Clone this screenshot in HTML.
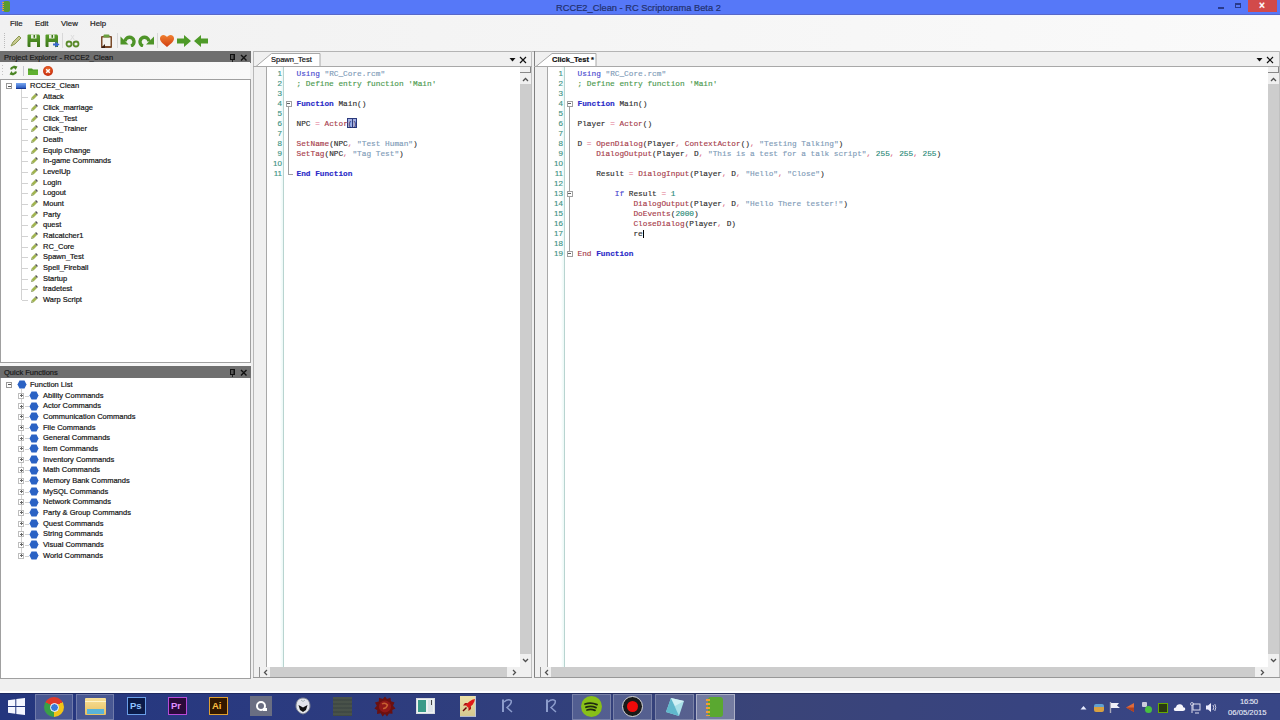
<!DOCTYPE html><html><head><meta charset="utf-8"><style>
*{margin:0;padding:0;box-sizing:border-box}
html,body{width:1280px;height:720px;overflow:hidden;background:#f0f0f0;font-family:"Liberation Sans",sans-serif;position:relative}
.abs{position:absolute}
.t{position:absolute;white-space:pre;font-family:"Liberation Sans",sans-serif;font-size:7.5px;line-height:10px;color:#141414;-webkit-text-stroke:0.2px currentColor}
.m{position:absolute;white-space:pre;font-family:"Liberation Mono",monospace;font-size:7.78px;line-height:10px;color:#333;-webkit-text-stroke:0.15px currentColor}
.hdr{position:absolute;background:#6f6f6f}
.kw{color:#4a4ad0}
.kb{color:#2a2ac8;font-weight:bold}
.st{color:#7f9cb8}
.cm{color:#4c9a50}
.fn{color:#a8404c}
.op{color:#e0708a}
.nu{color:#2a8a78}
.id{color:#303030}
.ln{position:absolute;white-space:pre;font-family:"Liberation Sans",sans-serif;font-size:8px;line-height:10px;color:#3e9484;text-align:right;-webkit-text-stroke:0.15px currentColor}
</style></head><body>
<div class="abs" style="left:0;top:0;width:1280px;height:14px;background:#5678f8"></div>
<div class="abs" style="left:0;top:14px;width:1280px;height:1px;background:#5868c8"></div>
<div class="abs" style="left:0;top:15px;width:1280px;height:1px;background:#f4f8ff"></div>
<div class="t" style="left:556px;top:2.4px;font-size:9.3px;line-height:12px;color:#22306e">RCCE2_Clean - RC Scriptorama Beta 2</div>
<div class="abs" style="left:3px;top:1px;width:7px;height:11px;background:#5a9a30;border-radius:2px"></div>
<div class="abs" style="left:2px;top:2px;width:2px;height:9px;background:repeating-linear-gradient(#e0a040 0 1px,transparent 1px 2px)"></div>
<div class="abs" style="left:1218px;top:7px;width:6px;height:1.5px;background:#2a3a8a"></div>
<div class="abs" style="left:1235px;top:3px;width:6px;height:5px;border:1.5px solid #2a3a8a;border-top-width:2px"></div>
<div class="abs" style="left:1248px;top:0;width:29px;height:12px;background:#d24a4a"></div>
<div class="t" style="left:1259px;top:0px;font-size:10px;line-height:12px;color:#fff;font-weight:bold">×</div>
<div class="abs" style="left:0;top:16px;width:1280px;height:35px;background:linear-gradient(90deg,#f1f1f1,#f5f5f5 45%,#fafafa)"></div>
<div class="t" style="left:10px;top:18.7px;font-size:7.8px;line-height:10px;color:#222">File</div>
<div class="t" style="left:35px;top:18.7px;font-size:7.8px;line-height:10px;color:#222">Edit</div>
<div class="t" style="left:61px;top:18.7px;font-size:7.8px;line-height:10px;color:#222">View</div>
<div class="t" style="left:90px;top:18.7px;font-size:7.8px;line-height:10px;color:#222">Help</div>
<div class="abs" style="left:4px;top:33px;width:1px;height:15px;background:repeating-linear-gradient(#bbb 0 1px,transparent 1px 2px)"></div>
<svg class="abs" style="left:9px;top:34px" width="14" height="14"><path d="M2 12 L4 8 L10 2 L12 4 L6 10 Z" fill="#c8c890" stroke="#8a9a50" stroke-width="1"/></svg>
<svg class="abs" style="left:27px;top:34px" width="15" height="14"><defs><linearGradient id="fg27" x1="0" y1="0" x2="0" y2="1"><stop offset="0" stop-color="#5a9e2a"/><stop offset="1" stop-color="#3a7418"/></linearGradient></defs><path d="M1.5 0.5 H12 L13 1.5 V13 H1.5 Q0.5 13 0.5 12 V1.5 Q0.5 0.5 1.5 0.5Z" fill="url(#fg27)"/><rect x="4" y="0.5" width="5.5" height="4" fill="#e8eee0"/><rect x="6.5" y="1" width="1.5" height="2.8" fill="#3a7418"/><rect x="3.5" y="8" width="6.5" height="5" fill="#f0f2ec"/></svg>
<svg class="abs" style="left:45px;top:34px" width="15" height="14"><defs><linearGradient id="fg45" x1="0" y1="0" x2="0" y2="1"><stop offset="0" stop-color="#5a9e2a"/><stop offset="1" stop-color="#3a7418"/></linearGradient></defs><path d="M1.5 0.5 H12 L13 1.5 V13 H1.5 Q0.5 13 0.5 12 V1.5 Q0.5 0.5 1.5 0.5Z" fill="url(#fg45)"/><rect x="4" y="0.5" width="5.5" height="4" fill="#e8eee0"/><rect x="6.5" y="1" width="1.5" height="2.8" fill="#3a7418"/><rect x="3.5" y="8" width="6.5" height="5" fill="#f0f2ec"/><path d="M8 9.5 H10.5 V7.5 L14.5 10.5 L10.5 13.5 V11.5 H8Z" fill="#3a68d0"/></svg>
<div class="abs" style="left:62px;top:33px;width:1px;height:15px;background:#d8d8d8"></div>
<svg class="abs" style="left:65px;top:34px" width="15" height="14"><circle cx="4" cy="10" r="2.5" fill="none" stroke="#5a8a2a" stroke-width="1.8"/><circle cx="11" cy="10" r="2.5" fill="none" stroke="#5a8a2a" stroke-width="1.8"/><path d="M5 7 L9 1 M10 7 L6 1" stroke="#ddd" stroke-width="1"/></svg>
<svg class="abs" style="left:100px;top:34px" width="14" height="14"><rect x="1" y="2" width="11" height="12" rx="1" fill="#7a4a2a"/><rect x="2.5" y="3.5" width="8" height="8.5" fill="#f4f4ee"/><path d="M1 14 L5 10 V14Z" fill="#3a2010"/><rect x="3.5" y="0.5" width="6" height="3" rx="1" fill="#6aa040"/></svg>
<div class="abs" style="left:117px;top:33px;width:1px;height:15px;background:#d8d8d8"></div>
<svg class="abs" style="left:120px;top:35px" width="17" height="12"><path d="M5 6.5 A4.5 4.5 0 1 1 11 11" stroke="#4e9428" stroke-width="3.4" fill="none"/><path d="M0.5 1.5 V9.5 H8.5Z" fill="#4e9428"/></svg>
<svg class="abs" style="left:138px;top:35px" width="17" height="12"><path d="M11 6.5 A4.5 4.5 0 1 0 5 11" stroke="#4e9428" stroke-width="3.4" fill="none"/><path d="M16 1.5 V9.5 H8Z" fill="#4e9428"/></svg>
<div class="abs" style="left:157px;top:33px;width:1px;height:15px;background:#d8d8d8"></div>
<svg class="abs" style="left:159px;top:34px" width="16" height="14"><path d="M8 13 C3 9 1 7 1 4.5 C1 2.5 2.5 1 4.5 1 C6 1 7.2 2 8 3 C8.8 2 10 1 11.5 1 C13.5 1 15 2.5 15 4.5 C15 7 13 9 8 13Z" fill="url(#hg)"/><defs><linearGradient id="hg" x1="0" y1="0" x2="0" y2="1"><stop offset="0" stop-color="#f08030"/><stop offset="1" stop-color="#d03c10"/></linearGradient></defs></svg>
<svg class="abs" style="left:176px;top:35px" width="16" height="12"><path d="M1 3.5 H8 V0 L15 6 L8 12 V8.5 H1Z" fill="#4e9a28"/></svg>
<svg class="abs" style="left:193px;top:35px" width="16" height="12"><path d="M15 3.5 H8 V0 L1 6 L8 12 V8.5 H15Z" fill="#4e9a28"/></svg>
<div class="hdr" style="left:0;top:50.8px;width:250.5px;height:11.8px"></div>
<div class="t" style="left:4px;top:52.5px;color:#1a1a1a">Project Explorer - RCCE2_Clean</div>
<svg class="abs" style="left:229px;top:53px" width="8" height="9"><rect x="1.5" y="1.5" width="4" height="5" fill="#555" stroke="#111" stroke-width="1"/><rect x="4.5" y="1" width="1.5" height="6" fill="#111"/><path d="M3.5 7 V9.5" stroke="#222" stroke-width="1"/></svg>
<svg class="abs" style="left:240px;top:54px" width="8" height="8"><path d="M1 1 L6.5 6.5 M6.5 1 L1 6.5" stroke="#111" stroke-width="1.4"/></svg>
<div class="abs" style="left:0;top:62px;width:250px;height:17px;background:linear-gradient(90deg,#f5f5f5,#f9f9f9)"></div>
<div class="abs" style="left:2px;top:65px;width:1px;height:10px;background:repeating-linear-gradient(#c4c4c4 0 1px,transparent 1px 3px)"></div>
<svg class="abs" style="left:8px;top:65px" width="11" height="11"><path d="M3 4.5 A3 3 0 0 1 8 3" stroke="#4a8424" stroke-width="2.2" fill="none"/><path d="M8 6.5 A3 3 0 0 1 3 8" stroke="#4a8424" stroke-width="2.2" fill="none"/><path d="M5.5 0.5 L9.5 1.5 L7.5 5Z" fill="#4a8424"/><path d="M5.5 10.5 L1.5 9.5 L3.5 6Z" fill="#4a8424"/></svg>
<div class="abs" style="left:23px;top:66px;width:1px;height:10px;background:#c8c8d0"></div>
<svg class="abs" style="left:27px;top:67px" width="12" height="9"><path d="M1 1.5 H5 L6 2.5 H11 V8 H1Z" fill="#4e9a28"/><rect x="1" y="3.5" width="10" height="4.5" fill="#60b030"/></svg>
<div class="abs" style="left:43px;top:65.5px;width:10px;height:10px;background:radial-gradient(circle at 50% 35%,#f07030,#c83010 70%);border-radius:50%"></div>
<svg class="abs" style="left:43px;top:65.5px" width="10" height="10"><path d="M3.2 3.2 L6.8 6.8 M6.8 3.2 L3.2 6.8" stroke="#fff" stroke-width="1.5"/></svg>
<div class="abs" style="left:0;top:79px;width:251px;height:284px;background:#fff;border:1px solid #a0a0a0"></div>
<div class="abs" style="left:0;top:363px;width:251px;height:3px;background:#f7f7f7"></div>
<div class="t" style="left:30px;top:81.20px">RCCE2_Clean</div>
<div class="abs" style="left:6px;top:83.2px;width:6px;height:6px;border:1px solid #999;background:#fff"></div>
<div class="abs" style="left:7.5px;top:85.7px;width:3px;height:1px;background:#555"></div>
<div class="abs" style="left:16px;top:82.7px;width:10px;height:6.5px;background:linear-gradient(#7aa8f0,#2a5ac0);border-bottom:1px solid #1a3a90"></div>
<div class="abs" style="left:21px;top:89.2px;width:1px;height:210.4px;background:#d2d2d2"></div>
<div class="abs" style="left:22px;top:97.4px;width:6px;height:1px;background:#d2d2d2"></div>
<svg class="abs" style="left:30px;top:92.4px" width="9" height="9"><path d="M2.5 6.5 L6 3" stroke="#a0b450" stroke-width="2.8"/><path d="M6 3 L7 2" stroke="#555" stroke-width="2.6"/><path d="M1 8 L1.6 5.6 L3.4 7.4Z" fill="#8a9a60"/></svg>
<div class="t" style="left:43px;top:92.4px">Attack</div>
<div class="abs" style="left:22px;top:108.0px;width:6px;height:1px;background:#d2d2d2"></div>
<svg class="abs" style="left:30px;top:103.0px" width="9" height="9"><path d="M2.5 6.5 L6 3" stroke="#a0b450" stroke-width="2.8"/><path d="M6 3 L7 2" stroke="#555" stroke-width="2.6"/><path d="M1 8 L1.6 5.6 L3.4 7.4Z" fill="#8a9a60"/></svg>
<div class="t" style="left:43px;top:103.0px">Click_marriage</div>
<div class="abs" style="left:22px;top:118.7px;width:6px;height:1px;background:#d2d2d2"></div>
<svg class="abs" style="left:30px;top:113.7px" width="9" height="9"><path d="M2.5 6.5 L6 3" stroke="#a0b450" stroke-width="2.8"/><path d="M6 3 L7 2" stroke="#555" stroke-width="2.6"/><path d="M1 8 L1.6 5.6 L3.4 7.4Z" fill="#8a9a60"/></svg>
<div class="t" style="left:43px;top:113.7px">Click_Test</div>
<div class="abs" style="left:22px;top:129.4px;width:6px;height:1px;background:#d2d2d2"></div>
<svg class="abs" style="left:30px;top:124.4px" width="9" height="9"><path d="M2.5 6.5 L6 3" stroke="#a0b450" stroke-width="2.8"/><path d="M6 3 L7 2" stroke="#555" stroke-width="2.6"/><path d="M1 8 L1.6 5.6 L3.4 7.4Z" fill="#8a9a60"/></svg>
<div class="t" style="left:43px;top:124.4px">Click_Trainer</div>
<div class="abs" style="left:22px;top:140.1px;width:6px;height:1px;background:#d2d2d2"></div>
<svg class="abs" style="left:30px;top:135.1px" width="9" height="9"><path d="M2.5 6.5 L6 3" stroke="#a0b450" stroke-width="2.8"/><path d="M6 3 L7 2" stroke="#555" stroke-width="2.6"/><path d="M1 8 L1.6 5.6 L3.4 7.4Z" fill="#8a9a60"/></svg>
<div class="t" style="left:43px;top:135.1px">Death</div>
<div class="abs" style="left:22px;top:150.7px;width:6px;height:1px;background:#d2d2d2"></div>
<svg class="abs" style="left:30px;top:145.7px" width="9" height="9"><path d="M2.5 6.5 L6 3" stroke="#a0b450" stroke-width="2.8"/><path d="M6 3 L7 2" stroke="#555" stroke-width="2.6"/><path d="M1 8 L1.6 5.6 L3.4 7.4Z" fill="#8a9a60"/></svg>
<div class="t" style="left:43px;top:145.7px">Equip Change</div>
<div class="abs" style="left:22px;top:161.4px;width:6px;height:1px;background:#d2d2d2"></div>
<svg class="abs" style="left:30px;top:156.4px" width="9" height="9"><path d="M2.5 6.5 L6 3" stroke="#a0b450" stroke-width="2.8"/><path d="M6 3 L7 2" stroke="#555" stroke-width="2.6"/><path d="M1 8 L1.6 5.6 L3.4 7.4Z" fill="#8a9a60"/></svg>
<div class="t" style="left:43px;top:156.4px">In-game Commands</div>
<div class="abs" style="left:22px;top:172.1px;width:6px;height:1px;background:#d2d2d2"></div>
<svg class="abs" style="left:30px;top:167.1px" width="9" height="9"><path d="M2.5 6.5 L6 3" stroke="#a0b450" stroke-width="2.8"/><path d="M6 3 L7 2" stroke="#555" stroke-width="2.6"/><path d="M1 8 L1.6 5.6 L3.4 7.4Z" fill="#8a9a60"/></svg>
<div class="t" style="left:43px;top:167.1px">LevelUp</div>
<div class="abs" style="left:22px;top:182.7px;width:6px;height:1px;background:#d2d2d2"></div>
<svg class="abs" style="left:30px;top:177.7px" width="9" height="9"><path d="M2.5 6.5 L6 3" stroke="#a0b450" stroke-width="2.8"/><path d="M6 3 L7 2" stroke="#555" stroke-width="2.6"/><path d="M1 8 L1.6 5.6 L3.4 7.4Z" fill="#8a9a60"/></svg>
<div class="t" style="left:43px;top:177.7px">Login</div>
<div class="abs" style="left:22px;top:193.4px;width:6px;height:1px;background:#d2d2d2"></div>
<svg class="abs" style="left:30px;top:188.4px" width="9" height="9"><path d="M2.5 6.5 L6 3" stroke="#a0b450" stroke-width="2.8"/><path d="M6 3 L7 2" stroke="#555" stroke-width="2.6"/><path d="M1 8 L1.6 5.6 L3.4 7.4Z" fill="#8a9a60"/></svg>
<div class="t" style="left:43px;top:188.4px">Logout</div>
<div class="abs" style="left:22px;top:204.1px;width:6px;height:1px;background:#d2d2d2"></div>
<svg class="abs" style="left:30px;top:199.1px" width="9" height="9"><path d="M2.5 6.5 L6 3" stroke="#a0b450" stroke-width="2.8"/><path d="M6 3 L7 2" stroke="#555" stroke-width="2.6"/><path d="M1 8 L1.6 5.6 L3.4 7.4Z" fill="#8a9a60"/></svg>
<div class="t" style="left:43px;top:199.1px">Mount</div>
<div class="abs" style="left:22px;top:214.7px;width:6px;height:1px;background:#d2d2d2"></div>
<svg class="abs" style="left:30px;top:209.7px" width="9" height="9"><path d="M2.5 6.5 L6 3" stroke="#a0b450" stroke-width="2.8"/><path d="M6 3 L7 2" stroke="#555" stroke-width="2.6"/><path d="M1 8 L1.6 5.6 L3.4 7.4Z" fill="#8a9a60"/></svg>
<div class="t" style="left:43px;top:209.7px">Party</div>
<div class="abs" style="left:22px;top:225.4px;width:6px;height:1px;background:#d2d2d2"></div>
<svg class="abs" style="left:30px;top:220.4px" width="9" height="9"><path d="M2.5 6.5 L6 3" stroke="#a0b450" stroke-width="2.8"/><path d="M6 3 L7 2" stroke="#555" stroke-width="2.6"/><path d="M1 8 L1.6 5.6 L3.4 7.4Z" fill="#8a9a60"/></svg>
<div class="t" style="left:43px;top:220.4px">quest</div>
<div class="abs" style="left:22px;top:236.1px;width:6px;height:1px;background:#d2d2d2"></div>
<svg class="abs" style="left:30px;top:231.1px" width="9" height="9"><path d="M2.5 6.5 L6 3" stroke="#a0b450" stroke-width="2.8"/><path d="M6 3 L7 2" stroke="#555" stroke-width="2.6"/><path d="M1 8 L1.6 5.6 L3.4 7.4Z" fill="#8a9a60"/></svg>
<div class="t" style="left:43px;top:231.1px">Ratcatcher1</div>
<div class="abs" style="left:22px;top:246.8px;width:6px;height:1px;background:#d2d2d2"></div>
<svg class="abs" style="left:30px;top:241.8px" width="9" height="9"><path d="M2.5 6.5 L6 3" stroke="#a0b450" stroke-width="2.8"/><path d="M6 3 L7 2" stroke="#555" stroke-width="2.6"/><path d="M1 8 L1.6 5.6 L3.4 7.4Z" fill="#8a9a60"/></svg>
<div class="t" style="left:43px;top:241.8px">RC_Core</div>
<div class="abs" style="left:22px;top:257.4px;width:6px;height:1px;background:#d2d2d2"></div>
<svg class="abs" style="left:30px;top:252.4px" width="9" height="9"><path d="M2.5 6.5 L6 3" stroke="#a0b450" stroke-width="2.8"/><path d="M6 3 L7 2" stroke="#555" stroke-width="2.6"/><path d="M1 8 L1.6 5.6 L3.4 7.4Z" fill="#8a9a60"/></svg>
<div class="t" style="left:43px;top:252.4px">Spawn_Test</div>
<div class="abs" style="left:22px;top:268.1px;width:6px;height:1px;background:#d2d2d2"></div>
<svg class="abs" style="left:30px;top:263.1px" width="9" height="9"><path d="M2.5 6.5 L6 3" stroke="#a0b450" stroke-width="2.8"/><path d="M6 3 L7 2" stroke="#555" stroke-width="2.6"/><path d="M1 8 L1.6 5.6 L3.4 7.4Z" fill="#8a9a60"/></svg>
<div class="t" style="left:43px;top:263.1px">Spell_Fireball</div>
<div class="abs" style="left:22px;top:278.8px;width:6px;height:1px;background:#d2d2d2"></div>
<svg class="abs" style="left:30px;top:273.8px" width="9" height="9"><path d="M2.5 6.5 L6 3" stroke="#a0b450" stroke-width="2.8"/><path d="M6 3 L7 2" stroke="#555" stroke-width="2.6"/><path d="M1 8 L1.6 5.6 L3.4 7.4Z" fill="#8a9a60"/></svg>
<div class="t" style="left:43px;top:273.8px">Startup</div>
<div class="abs" style="left:22px;top:289.4px;width:6px;height:1px;background:#d2d2d2"></div>
<svg class="abs" style="left:30px;top:284.4px" width="9" height="9"><path d="M2.5 6.5 L6 3" stroke="#a0b450" stroke-width="2.8"/><path d="M6 3 L7 2" stroke="#555" stroke-width="2.6"/><path d="M1 8 L1.6 5.6 L3.4 7.4Z" fill="#8a9a60"/></svg>
<div class="t" style="left:43px;top:284.4px">tradetest</div>
<div class="abs" style="left:22px;top:300.1px;width:6px;height:1px;background:#d2d2d2"></div>
<svg class="abs" style="left:30px;top:295.1px" width="9" height="9"><path d="M2.5 6.5 L6 3" stroke="#a0b450" stroke-width="2.8"/><path d="M6 3 L7 2" stroke="#555" stroke-width="2.6"/><path d="M1 8 L1.6 5.6 L3.4 7.4Z" fill="#8a9a60"/></svg>
<div class="t" style="left:43px;top:295.1px">Warp Script</div>
<div class="hdr" style="left:0;top:365.8px;width:250.5px;height:11.8px"></div>
<div class="t" style="left:4px;top:367.5px;color:#1a1a1a">Quick Functions</div>
<svg class="abs" style="left:229px;top:368px" width="8" height="9"><rect x="1.5" y="1.5" width="4" height="5" fill="#555" stroke="#111" stroke-width="1"/><rect x="4.5" y="1" width="1.5" height="6" fill="#111"/><path d="M3.5 7 V9.5" stroke="#222" stroke-width="1"/></svg>
<svg class="abs" style="left:240px;top:369px" width="8" height="8"><path d="M1 1 L6.5 6.5 M6.5 1 L1 6.5" stroke="#111" stroke-width="1.4"/></svg>
<div class="abs" style="left:0;top:378px;width:251px;height:301px;background:#fff;border:1px solid #a0a0a0;border-top:none"></div>
<div class="t" style="left:30px;top:379.8px">Function List</div>
<div class="abs" style="left:6px;top:381.8px;width:6px;height:6px;border:1px solid #999;background:#fff"></div>
<div class="abs" style="left:7.5px;top:384.3px;width:3px;height:1px;background:#555"></div>
<svg class="abs" style="left:17px;top:380.3px" width="10" height="9"><path d="M2.5 0.5 H7.5 L9.5 4.5 L7.5 8.5 H2.5 L0.5 4.5Z" fill="#2a62c4"/></svg>
<div class="abs" style="left:21px;top:388.8px;width:1px;height:166.7px;background:#d2d2d2"></div>
<div class="abs" style="left:18px;top:392.5px;width:6px;height:6px;border:1px solid #bdbdbd;background:#fff"></div>
<div class="abs" style="left:19.5px;top:395.0px;width:3px;height:1px;background:#666"></div>
<div class="abs" style="left:20.5px;top:394.0px;width:1px;height:3px;background:#666"></div>
<div class="abs" style="left:25px;top:395.5px;width:4px;height:1px;background:#d2d2d2"></div>
<svg class="abs" style="left:29px;top:391.0px" width="10" height="9"><path d="M2.5 0.5 H7.5 L9.5 4.5 L7.5 8.5 H2.5 L0.5 4.5Z" fill="#2a62c4"/></svg>
<div class="t" style="left:43px;top:390.5px">Ability Commands</div>
<div class="abs" style="left:18px;top:403.1px;width:6px;height:6px;border:1px solid #bdbdbd;background:#fff"></div>
<div class="abs" style="left:19.5px;top:405.6px;width:3px;height:1px;background:#666"></div>
<div class="abs" style="left:20.5px;top:404.6px;width:1px;height:3px;background:#666"></div>
<div class="abs" style="left:25px;top:406.1px;width:4px;height:1px;background:#d2d2d2"></div>
<svg class="abs" style="left:29px;top:401.6px" width="10" height="9"><path d="M2.5 0.5 H7.5 L9.5 4.5 L7.5 8.5 H2.5 L0.5 4.5Z" fill="#2a62c4"/></svg>
<div class="t" style="left:43px;top:401.1px">Actor Commands</div>
<div class="abs" style="left:18px;top:413.8px;width:6px;height:6px;border:1px solid #bdbdbd;background:#fff"></div>
<div class="abs" style="left:19.5px;top:416.3px;width:3px;height:1px;background:#666"></div>
<div class="abs" style="left:20.5px;top:415.3px;width:1px;height:3px;background:#666"></div>
<div class="abs" style="left:25px;top:416.8px;width:4px;height:1px;background:#d2d2d2"></div>
<svg class="abs" style="left:29px;top:412.3px" width="10" height="9"><path d="M2.5 0.5 H7.5 L9.5 4.5 L7.5 8.5 H2.5 L0.5 4.5Z" fill="#2a62c4"/></svg>
<div class="t" style="left:43px;top:411.8px">Communication Commands</div>
<div class="abs" style="left:18px;top:424.5px;width:6px;height:6px;border:1px solid #bdbdbd;background:#fff"></div>
<div class="abs" style="left:19.5px;top:427.0px;width:3px;height:1px;background:#666"></div>
<div class="abs" style="left:20.5px;top:426.0px;width:1px;height:3px;background:#666"></div>
<div class="abs" style="left:25px;top:427.5px;width:4px;height:1px;background:#d2d2d2"></div>
<svg class="abs" style="left:29px;top:423.0px" width="10" height="9"><path d="M2.5 0.5 H7.5 L9.5 4.5 L7.5 8.5 H2.5 L0.5 4.5Z" fill="#2a62c4"/></svg>
<div class="t" style="left:43px;top:422.5px">File Commands</div>
<div class="abs" style="left:18px;top:435.2px;width:6px;height:6px;border:1px solid #bdbdbd;background:#fff"></div>
<div class="abs" style="left:19.5px;top:437.7px;width:3px;height:1px;background:#666"></div>
<div class="abs" style="left:20.5px;top:436.7px;width:1px;height:3px;background:#666"></div>
<div class="abs" style="left:25px;top:438.2px;width:4px;height:1px;background:#d2d2d2"></div>
<svg class="abs" style="left:29px;top:433.7px" width="10" height="9"><path d="M2.5 0.5 H7.5 L9.5 4.5 L7.5 8.5 H2.5 L0.5 4.5Z" fill="#2a62c4"/></svg>
<div class="t" style="left:43px;top:433.2px">General Commands</div>
<div class="abs" style="left:18px;top:445.8px;width:6px;height:6px;border:1px solid #bdbdbd;background:#fff"></div>
<div class="abs" style="left:19.5px;top:448.3px;width:3px;height:1px;background:#666"></div>
<div class="abs" style="left:20.5px;top:447.3px;width:1px;height:3px;background:#666"></div>
<div class="abs" style="left:25px;top:448.8px;width:4px;height:1px;background:#d2d2d2"></div>
<svg class="abs" style="left:29px;top:444.3px" width="10" height="9"><path d="M2.5 0.5 H7.5 L9.5 4.5 L7.5 8.5 H2.5 L0.5 4.5Z" fill="#2a62c4"/></svg>
<div class="t" style="left:43px;top:443.8px">Item Commands</div>
<div class="abs" style="left:18px;top:456.5px;width:6px;height:6px;border:1px solid #bdbdbd;background:#fff"></div>
<div class="abs" style="left:19.5px;top:459.0px;width:3px;height:1px;background:#666"></div>
<div class="abs" style="left:20.5px;top:458.0px;width:1px;height:3px;background:#666"></div>
<div class="abs" style="left:25px;top:459.5px;width:4px;height:1px;background:#d2d2d2"></div>
<svg class="abs" style="left:29px;top:455.0px" width="10" height="9"><path d="M2.5 0.5 H7.5 L9.5 4.5 L7.5 8.5 H2.5 L0.5 4.5Z" fill="#2a62c4"/></svg>
<div class="t" style="left:43px;top:454.5px">Inventory Commands</div>
<div class="abs" style="left:18px;top:467.2px;width:6px;height:6px;border:1px solid #bdbdbd;background:#fff"></div>
<div class="abs" style="left:19.5px;top:469.7px;width:3px;height:1px;background:#666"></div>
<div class="abs" style="left:20.5px;top:468.7px;width:1px;height:3px;background:#666"></div>
<div class="abs" style="left:25px;top:470.2px;width:4px;height:1px;background:#d2d2d2"></div>
<svg class="abs" style="left:29px;top:465.7px" width="10" height="9"><path d="M2.5 0.5 H7.5 L9.5 4.5 L7.5 8.5 H2.5 L0.5 4.5Z" fill="#2a62c4"/></svg>
<div class="t" style="left:43px;top:465.2px">Math Commands</div>
<div class="abs" style="left:18px;top:477.8px;width:6px;height:6px;border:1px solid #bdbdbd;background:#fff"></div>
<div class="abs" style="left:19.5px;top:480.3px;width:3px;height:1px;background:#666"></div>
<div class="abs" style="left:20.5px;top:479.3px;width:1px;height:3px;background:#666"></div>
<div class="abs" style="left:25px;top:480.8px;width:4px;height:1px;background:#d2d2d2"></div>
<svg class="abs" style="left:29px;top:476.3px" width="10" height="9"><path d="M2.5 0.5 H7.5 L9.5 4.5 L7.5 8.5 H2.5 L0.5 4.5Z" fill="#2a62c4"/></svg>
<div class="t" style="left:43px;top:475.8px">Memory Bank Commands</div>
<div class="abs" style="left:18px;top:488.5px;width:6px;height:6px;border:1px solid #bdbdbd;background:#fff"></div>
<div class="abs" style="left:19.5px;top:491.0px;width:3px;height:1px;background:#666"></div>
<div class="abs" style="left:20.5px;top:490.0px;width:1px;height:3px;background:#666"></div>
<div class="abs" style="left:25px;top:491.5px;width:4px;height:1px;background:#d2d2d2"></div>
<svg class="abs" style="left:29px;top:487.0px" width="10" height="9"><path d="M2.5 0.5 H7.5 L9.5 4.5 L7.5 8.5 H2.5 L0.5 4.5Z" fill="#2a62c4"/></svg>
<div class="t" style="left:43px;top:486.5px">MySQL Commands</div>
<div class="abs" style="left:18px;top:499.2px;width:6px;height:6px;border:1px solid #bdbdbd;background:#fff"></div>
<div class="abs" style="left:19.5px;top:501.7px;width:3px;height:1px;background:#666"></div>
<div class="abs" style="left:20.5px;top:500.7px;width:1px;height:3px;background:#666"></div>
<div class="abs" style="left:25px;top:502.2px;width:4px;height:1px;background:#d2d2d2"></div>
<svg class="abs" style="left:29px;top:497.7px" width="10" height="9"><path d="M2.5 0.5 H7.5 L9.5 4.5 L7.5 8.5 H2.5 L0.5 4.5Z" fill="#2a62c4"/></svg>
<div class="t" style="left:43px;top:497.2px">Network Commands</div>
<div class="abs" style="left:18px;top:509.8px;width:6px;height:6px;border:1px solid #bdbdbd;background:#fff"></div>
<div class="abs" style="left:19.5px;top:512.3px;width:3px;height:1px;background:#666"></div>
<div class="abs" style="left:20.5px;top:511.3px;width:1px;height:3px;background:#666"></div>
<div class="abs" style="left:25px;top:512.8px;width:4px;height:1px;background:#d2d2d2"></div>
<svg class="abs" style="left:29px;top:508.3px" width="10" height="9"><path d="M2.5 0.5 H7.5 L9.5 4.5 L7.5 8.5 H2.5 L0.5 4.5Z" fill="#2a62c4"/></svg>
<div class="t" style="left:43px;top:507.8px">Party &amp; Group Commands</div>
<div class="abs" style="left:18px;top:520.5px;width:6px;height:6px;border:1px solid #bdbdbd;background:#fff"></div>
<div class="abs" style="left:19.5px;top:523.0px;width:3px;height:1px;background:#666"></div>
<div class="abs" style="left:20.5px;top:522.0px;width:1px;height:3px;background:#666"></div>
<div class="abs" style="left:25px;top:523.5px;width:4px;height:1px;background:#d2d2d2"></div>
<svg class="abs" style="left:29px;top:519.0px" width="10" height="9"><path d="M2.5 0.5 H7.5 L9.5 4.5 L7.5 8.5 H2.5 L0.5 4.5Z" fill="#2a62c4"/></svg>
<div class="t" style="left:43px;top:518.5px">Quest Commands</div>
<div class="abs" style="left:18px;top:531.2px;width:6px;height:6px;border:1px solid #bdbdbd;background:#fff"></div>
<div class="abs" style="left:19.5px;top:533.7px;width:3px;height:1px;background:#666"></div>
<div class="abs" style="left:20.5px;top:532.7px;width:1px;height:3px;background:#666"></div>
<div class="abs" style="left:25px;top:534.2px;width:4px;height:1px;background:#d2d2d2"></div>
<svg class="abs" style="left:29px;top:529.7px" width="10" height="9"><path d="M2.5 0.5 H7.5 L9.5 4.5 L7.5 8.5 H2.5 L0.5 4.5Z" fill="#2a62c4"/></svg>
<div class="t" style="left:43px;top:529.2px">String Commands</div>
<div class="abs" style="left:18px;top:541.9px;width:6px;height:6px;border:1px solid #bdbdbd;background:#fff"></div>
<div class="abs" style="left:19.5px;top:544.4px;width:3px;height:1px;background:#666"></div>
<div class="abs" style="left:20.5px;top:543.4px;width:1px;height:3px;background:#666"></div>
<div class="abs" style="left:25px;top:544.9px;width:4px;height:1px;background:#d2d2d2"></div>
<svg class="abs" style="left:29px;top:540.4px" width="10" height="9"><path d="M2.5 0.5 H7.5 L9.5 4.5 L7.5 8.5 H2.5 L0.5 4.5Z" fill="#2a62c4"/></svg>
<div class="t" style="left:43px;top:539.9px">Visual Commands</div>
<div class="abs" style="left:18px;top:552.5px;width:6px;height:6px;border:1px solid #bdbdbd;background:#fff"></div>
<div class="abs" style="left:19.5px;top:555.0px;width:3px;height:1px;background:#666"></div>
<div class="abs" style="left:20.5px;top:554.0px;width:1px;height:3px;background:#666"></div>
<div class="abs" style="left:25px;top:555.5px;width:4px;height:1px;background:#d2d2d2"></div>
<svg class="abs" style="left:29px;top:551.0px" width="10" height="9"><path d="M2.5 0.5 H7.5 L9.5 4.5 L7.5 8.5 H2.5 L0.5 4.5Z" fill="#2a62c4"/></svg>
<div class="t" style="left:43px;top:550.5px">World Commands</div>
<div class="abs" style="left:253px;top:51px;width:1027px;height:1px;background:#b4b4b4"></div>
<div class="abs" style="left:253px;top:51px;width:279px;height:627px;background:#f0f0f0;border-top:1px solid #b4b4b4"></div>
<div class="abs" style="left:253px;top:51px;width:1px;height:627px;background:#b8b8b8"></div>
<div class="abs" style="left:531px;top:51px;width:1px;height:627px;background:#c0c0c0"></div>
<svg class="abs" style="left:256px;top:53px" width="71" height="15"><path d="M0 13.5 L15.5 0.5 H64 V13.5" fill="#fff" stroke="#a8a8a8" stroke-width="1"/></svg>
<div class="abs" style="left:253px;top:66px;width:279px;height:1px;background:#a8a8a8"></div>
<div class="t" style="left:271px;top:55px;font-weight:normal;color:#111">Spawn_Test</div>
<svg class="abs" style="left:509px;top:57px" width="8" height="6"><path d="M0.5 1 H6.5 L3.5 4.5Z" fill="#111"/></svg>
<svg class="abs" style="left:519px;top:56px" width="9" height="8"><path d="M1 1 L7 7 M7 1 L1 7" stroke="#111" stroke-width="1.2"/></svg>
<div class="abs" style="left:266px;top:67px;width:254px;height:600px;background:#fff;border-left:1px solid #a8a8a8"></div>
<div class="abs" style="left:280px;top:67px;width:3px;height:600px;background:linear-gradient(90deg,rgba(220,248,248,0),#eaf8f6)"></div>
<div class="abs" style="left:283px;top:67px;width:1px;height:600px;background:#b8d4d0"></div>
<div class="abs" style="left:288.0px;top:103.5px;width:1px;height:70.0px;background:#a0a0a0"></div>
<div class="abs" style="left:288.0px;top:173.5px;width:5px;height:1px;background:#a0a0a0"></div>
<div class="abs" style="left:285.5px;top:100.5px;width:6px;height:6px;background:#fff;border:1px solid #a0a0a0"></div>
<div class="abs" style="left:287.0px;top:103.0px;width:3px;height:1px;background:#606060"></div>
<div class="abs" style="left:520px;top:67px;width:11px;height:600px;background:#f0f0f0"></div>
<div class="abs" style="left:520px;top:72px;width:10px;height:1px;background:#888"></div>
<div class="abs" style="left:530px;top:67px;width:1px;height:6px;background:#888"></div>
<div class="abs" style="left:520px;top:84px;width:11px;height:570px;background:#cdcdcd"></div>
<svg class="abs" style="left:522px;top:77px" width="7" height="5"><path d="M1 4 L3.5 1.5 L6 4" stroke="#505050" stroke-width="1.3" fill="none"/></svg>
<svg class="abs" style="left:522px;top:658px" width="7" height="5"><path d="M1 1 L3.5 3.5 L6 1" stroke="#505050" stroke-width="1.3" fill="none"/></svg>
<div class="abs" style="left:254px;top:667px;width:266px;height:10px;background:#f0f0f0"></div>
<div class="abs" style="left:259px;top:667px;width:1px;height:10px;background:#909090"></div>
<div class="abs" style="left:270px;top:667px;width:237px;height:10px;background:#cdcdcd"></div>
<svg class="abs" style="left:263px;top:669px" width="5" height="7"><path d="M4 1 L1.5 3.5 L4 6" stroke="#505050" stroke-width="1.3" fill="none"/></svg>
<svg class="abs" style="left:512px;top:669px" width="5" height="7"><path d="M1 1 L3.5 3.5 L1 6" stroke="#505050" stroke-width="1.3" fill="none"/></svg>
<div class="abs" style="left:253px;top:677px;width:279px;height:1px;background:#989898"></div>
<div class="ln" style="left:266px;top:69px;width:16px">1</div>
<div class="m" style="left:296.5px;top:69px"><span class="kw">Using</span> <span class="st">&quot;RC_Core.rcm&quot;</span></div>
<div class="ln" style="left:266px;top:79px;width:16px">2</div>
<div class="m" style="left:296.5px;top:79px"><span class="cm">; Define entry function &#x27;Main&#x27;</span></div>
<div class="ln" style="left:266px;top:89px;width:16px">3</div>
<div class="m" style="left:296.5px;top:89px"></div>
<div class="ln" style="left:266px;top:99px;width:16px">4</div>
<div class="m" style="left:296.5px;top:99px"><span class="kb">Function</span> <span class="id">Main()</span></div>
<div class="ln" style="left:266px;top:109px;width:16px">5</div>
<div class="m" style="left:296.5px;top:109px"></div>
<div class="ln" style="left:266px;top:119px;width:16px">6</div>
<div class="abs" style="left:347px;top:118px;width:5.5px;height:10px;background:#a4b0e2;border:1px solid #2c3a7c"></div><div class="abs" style="left:351.5px;top:118px;width:5.5px;height:10px;background:#a4b0e2;border:1px solid #2c3a7c"></div>
<div class="m" style="left:296.5px;top:119px"><span class="id">NPC</span> <span class="op">=</span> <span class="fn">Actor</span><span style="color:#1a2050;-webkit-text-stroke:0">()</span></div>
<div class="ln" style="left:266px;top:129px;width:16px">7</div>
<div class="m" style="left:296.5px;top:129px"></div>
<div class="ln" style="left:266px;top:139px;width:16px">8</div>
<div class="m" style="left:296.5px;top:139px"><span class="fn">SetName</span><span class="id">(NPC</span><span class="op">,</span> <span class="st">&quot;Test Human&quot;</span><span class="id">)</span></div>
<div class="ln" style="left:266px;top:149px;width:16px">9</div>
<div class="m" style="left:296.5px;top:149px"><span class="fn">SetTag</span><span class="id">(NPC</span><span class="op">,</span> <span class="st">&quot;Tag Test&quot;</span><span class="id">)</span></div>
<div class="ln" style="left:266px;top:159px;width:16px">10</div>
<div class="m" style="left:296.5px;top:159px"></div>
<div class="ln" style="left:266px;top:169px;width:16px">11</div>
<div class="m" style="left:296.5px;top:169px"><span class="kb">End Function</span></div>
<div class="abs" style="left:534px;top:51px;width:746px;height:627px;background:#f0f0f0;border-top:1px solid #b4b4b4"></div>
<div class="abs" style="left:534px;top:51px;width:1px;height:627px;background:#808080"></div>
<div class="abs" style="left:1279px;top:51px;width:1px;height:627px;background:#c0c0c0"></div>
<svg class="abs" style="left:535.5px;top:53px" width="67" height="15"><path d="M0 13.5 L16 0.5 H60 V13.5" fill="#fff" stroke="#a8a8a8" stroke-width="1"/></svg>
<div class="abs" style="left:534px;top:66px;width:746px;height:1px;background:#a8a8a8"></div>
<div class="t" style="left:552px;top:55px;font-weight:bold;color:#111">Click_Test *</div>
<svg class="abs" style="left:1256px;top:57px" width="8" height="6"><path d="M0.5 1 H6.5 L3.5 4.5Z" fill="#111"/></svg>
<svg class="abs" style="left:1266px;top:56px" width="9" height="8"><path d="M1 1 L7 7 M7 1 L1 7" stroke="#111" stroke-width="1.2"/></svg>
<div class="abs" style="left:547px;top:67px;width:721px;height:600px;background:#fff;border-left:1px solid #a8a8a8"></div>
<div class="abs" style="left:561px;top:67px;width:3px;height:600px;background:linear-gradient(90deg,rgba(220,248,248,0),#eaf8f6)"></div>
<div class="abs" style="left:564px;top:67px;width:1px;height:600px;background:#b8d4d0"></div>
<div class="abs" style="left:569.0px;top:103.5px;width:1px;height:150.0px;background:#a0a0a0"></div>
<div class="abs" style="left:566.5px;top:100.5px;width:6px;height:6px;background:#fff;border:1px solid #a0a0a0"></div>
<div class="abs" style="left:568.0px;top:103.0px;width:3px;height:1px;background:#606060"></div>
<div class="abs" style="left:566.5px;top:190.5px;width:6px;height:6px;background:#fff;border:1px solid #a0a0a0"></div>
<div class="abs" style="left:568.0px;top:193.0px;width:3px;height:1px;background:#606060"></div>
<div class="abs" style="left:566.5px;top:250.5px;width:6px;height:6px;background:#fff;border:1px solid #a0a0a0"></div>
<div class="abs" style="left:568.0px;top:253.0px;width:3px;height:1px;background:#606060"></div>
<div class="abs" style="left:1268px;top:67px;width:11px;height:600px;background:#f0f0f0"></div>
<div class="abs" style="left:1268px;top:72px;width:10px;height:1px;background:#888"></div>
<div class="abs" style="left:1278px;top:67px;width:1px;height:6px;background:#888"></div>
<div class="abs" style="left:1268px;top:84px;width:11px;height:570px;background:#cdcdcd"></div>
<svg class="abs" style="left:1270px;top:77px" width="7" height="5"><path d="M1 4 L3.5 1.5 L6 4" stroke="#505050" stroke-width="1.3" fill="none"/></svg>
<svg class="abs" style="left:1270px;top:658px" width="7" height="5"><path d="M1 1 L3.5 3.5 L6 1" stroke="#505050" stroke-width="1.3" fill="none"/></svg>
<div class="abs" style="left:535px;top:667px;width:733px;height:10px;background:#f0f0f0"></div>
<div class="abs" style="left:540px;top:667px;width:1px;height:10px;background:#909090"></div>
<div class="abs" style="left:551px;top:667px;width:704px;height:10px;background:#cdcdcd"></div>
<svg class="abs" style="left:544px;top:669px" width="5" height="7"><path d="M4 1 L1.5 3.5 L4 6" stroke="#505050" stroke-width="1.3" fill="none"/></svg>
<svg class="abs" style="left:1260px;top:669px" width="5" height="7"><path d="M1 1 L3.5 3.5 L1 6" stroke="#505050" stroke-width="1.3" fill="none"/></svg>
<div class="abs" style="left:534px;top:677px;width:746px;height:1px;background:#989898"></div>
<div class="ln" style="left:547px;top:69px;width:16px">1</div>
<div class="m" style="left:577.5px;top:69px"><span class="kw">Using</span> <span class="st">&quot;RC_Core.rcm&quot;</span></div>
<div class="ln" style="left:547px;top:79px;width:16px">2</div>
<div class="m" style="left:577.5px;top:79px"><span class="cm">; Define entry function &#x27;Main&#x27;</span></div>
<div class="ln" style="left:547px;top:89px;width:16px">3</div>
<div class="m" style="left:577.5px;top:89px"></div>
<div class="ln" style="left:547px;top:99px;width:16px">4</div>
<div class="m" style="left:577.5px;top:99px"><span class="kb">Function</span> <span class="id">Main()</span></div>
<div class="ln" style="left:547px;top:109px;width:16px">5</div>
<div class="m" style="left:577.5px;top:109px"></div>
<div class="ln" style="left:547px;top:119px;width:16px">6</div>
<div class="m" style="left:577.5px;top:119px"><span class="id">Player</span> <span class="op">=</span> <span class="fn">Actor</span><span class="id">()</span></div>
<div class="ln" style="left:547px;top:129px;width:16px">7</div>
<div class="m" style="left:577.5px;top:129px"></div>
<div class="ln" style="left:547px;top:139px;width:16px">8</div>
<div class="m" style="left:577.5px;top:139px"><span class="id">D</span> <span class="op">=</span> <span class="fn">OpenDialog</span><span class="id">(Player</span><span class="op">,</span> <span class="fn">ContextActor</span><span class="id">()</span><span class="op">,</span> <span class="st">&quot;Testing Talking&quot;</span><span class="id">)</span></div>
<div class="ln" style="left:547px;top:149px;width:16px">9</div>
<div class="m" style="left:577.5px;top:149px">    <span class="fn">DialogOutput</span><span class="id">(Player</span><span class="op">,</span> <span class="id">D</span><span class="op">,</span> <span class="st">&quot;This is a test for a talk script&quot;</span><span class="op">,</span> <span class="nu">255</span><span class="op">,</span> <span class="nu">255</span><span class="op">,</span> <span class="nu">255</span><span class="id">)</span></div>
<div class="ln" style="left:547px;top:159px;width:16px">10</div>
<div class="m" style="left:577.5px;top:159px"></div>
<div class="ln" style="left:547px;top:169px;width:16px">11</div>
<div class="m" style="left:577.5px;top:169px">    <span class="id">Result</span> <span class="op">=</span> <span class="fn">DialogInput</span><span class="id">(Player</span><span class="op">,</span> <span class="id">D</span><span class="op">,</span> <span class="st">&quot;Hello&quot;</span><span class="op">,</span> <span class="st">&quot;Close&quot;</span><span class="id">)</span></div>
<div class="ln" style="left:547px;top:179px;width:16px">12</div>
<div class="m" style="left:577.5px;top:179px"></div>
<div class="ln" style="left:547px;top:189px;width:16px">13</div>
<div class="m" style="left:577.5px;top:189px">        <span class="kw">If</span> <span class="id">Result</span> <span class="op">=</span> <span class="nu">1</span></div>
<div class="ln" style="left:547px;top:199px;width:16px">14</div>
<div class="m" style="left:577.5px;top:199px">            <span class="fn">DialogOutput</span><span class="id">(Player</span><span class="op">,</span> <span class="id">D</span><span class="op">,</span> <span class="st">&quot;Hello There tester!&quot;</span><span class="id">)</span></div>
<div class="ln" style="left:547px;top:209px;width:16px">15</div>
<div class="m" style="left:577.5px;top:209px">            <span class="fn">DoEvents</span><span class="id">(</span><span class="nu">2000</span><span class="id">)</span></div>
<div class="ln" style="left:547px;top:219px;width:16px">16</div>
<div class="m" style="left:577.5px;top:219px">            <span class="fn">CloseDialog</span><span class="id">(Player</span><span class="op">,</span> <span class="id">D)</span></div>
<div class="ln" style="left:547px;top:229px;width:16px">17</div>
<div class="m" style="left:577.5px;top:229px">            <span class="id">re</span><span style="border-left:1.5px solid #000;margin-left:0.5px"></span></div>
<div class="ln" style="left:547px;top:239px;width:16px">18</div>
<div class="m" style="left:577.5px;top:239px"></div>
<div class="ln" style="left:547px;top:249px;width:16px">19</div>
<div class="m" style="left:577.5px;top:249px"><span class="fn">End</span> <span class="kb">Function</span></div>
<div class="abs" style="left:0;top:691px;width:1280px;height:2px;background:#fcfdff"></div>
<div class="abs" style="left:0;top:693px;width:1280px;height:27px;background:linear-gradient(90deg,#24367e 0%,#2a3a80 20%,#32407c 45%,#3a4478 60%,#384480 80%,#384686 100%)"></div>
<div class="abs" style="left:0;top:693px;width:1280px;height:1px;background:rgba(20,25,60,0.45)"></div>
<svg class="abs" style="left:8px;top:698px" width="18" height="17"><path d="M0 2.3 L7.3 1.3 V8 H0Z M8.3 1.1 L17 0 V8 H8.3Z M0 9 H7.3 V15.7 L0 14.7Z M8.3 9 H17 V17 L8.3 15.9Z" fill="#f4f6ff"/></svg>
<div class="abs" style="left:35px;top:694px;width:38px;height:26px;background:rgba(255,255,255,0.16);border:1px solid rgba(255,255,255,0.22)"></div>
<div class="abs" style="left:76px;top:694px;width:38px;height:26px;background:rgba(255,255,255,0.16);border:1px solid rgba(255,255,255,0.22)"></div>
<div class="abs" style="left:572px;top:694px;width:39px;height:26px;background:rgba(255,255,255,0.16);border:1px solid rgba(255,255,255,0.22)"></div>
<div class="abs" style="left:613px;top:694px;width:39px;height:26px;background:rgba(255,255,255,0.16);border:1px solid rgba(255,255,255,0.22)"></div>
<div class="abs" style="left:655px;top:694px;width:39px;height:26px;background:rgba(255,255,255,0.16);border:1px solid rgba(255,255,255,0.22)"></div>
<div class="abs" style="left:696px;top:694px;width:39px;height:26px;background:rgba(255,255,255,0.30);border:1px solid rgba(255,255,255,0.40)"></div>
<div class="abs" style="left:44px;top:697px;width:20px;height:20px;border-radius:50%;background:conic-gradient(from -60deg,#e03a2a 0 120deg,#f2c418 120deg 240deg,#3aa048 240deg 360deg)"></div>
<div class="abs" style="left:49.5px;top:702.5px;width:9px;height:9px;border-radius:50%;background:#3a7ad8;border:1.6px solid #fff"></div>
<div class="abs" style="left:85px;top:698px;width:21px;height:17px;background:linear-gradient(#f8e098,#e8c060);border-radius:1px"></div>
<div class="abs" style="left:87px;top:709px;width:17px;height:5px;background:#5ab4d8"></div>
<div class="abs" style="left:85px;top:701px;width:21px;height:1px;background:#fff4c8"></div>
<div class="abs" style="left:127px;top:697px;width:19px;height:18px;background:#0b1a48;border:1px solid #6a9ee8"></div>
<div class="t" style="left:130px;top:700px;font-size:9.5px;line-height:12px;font-weight:bold;color:#90c4ff;-webkit-text-stroke:0">Ps</div>
<div class="abs" style="left:168px;top:697px;width:19px;height:18px;background:#2a0a3a;border:1px solid #b84ad8"></div>
<div class="t" style="left:171px;top:700px;font-size:9.5px;line-height:12px;font-weight:bold;color:#e090ff;-webkit-text-stroke:0">Pr</div>
<div class="abs" style="left:209px;top:697px;width:19px;height:18px;background:#321800;border:1px solid #e0a030"></div>
<div class="t" style="left:212px;top:700px;font-size:9.5px;line-height:12px;font-weight:bold;color:#ffc040;-webkit-text-stroke:0">Ai</div>
<div class="abs" style="left:250px;top:696px;width:22px;height:20px;background:#6a6e82"></div>
<div class="abs" style="left:255.5px;top:700.5px;width:10px;height:10px;border:2.6px solid #fff;border-radius:50%"></div>
<div class="abs" style="left:263px;top:708px;width:4px;height:3px;background:#fff"></div>
<svg class="abs" style="left:294px;top:697px" width="18" height="18"><path d="M9 1 C4 1 2 5 2 9 C2 13 5 16 9 17 C13 16 16 13 16 9 C16 5 14 1 9 1Z" fill="#e4e6ec" stroke="#7a8090" stroke-width="1"/><path d="M4.5 8 L9 10.5 L13.5 8 L12 13 L9 15 L6 13Z" fill="#111"/><path d="M7 3 Q9 6 11 3" stroke="#9aa" fill="none" stroke-width="0.8"/></svg>
<div class="abs" style="left:333px;top:697px;width:19px;height:19px;background:repeating-linear-gradient(#4e5640 0 2px,#444c3a 2px 4px);opacity:0.85"></div>
<svg class="abs" style="left:374px;top:696px" width="22" height="21"><path d="M11 0.5 L13 3 L16.5 1.8 L17 5.3 L20.5 6.5 L19 9.8 L21.5 12.5 L18.3 14 L18.5 17.8 L15 17.5 L13 20.5 L11 18 L8.5 20.5 L6.8 17.3 L3 18 L3.3 14.3 L0.5 12.5 L2.8 9.8 L1 6.5 L4.8 5.5 L5 1.8 L8.8 3Z" fill="#6a1010"/><circle cx="11" cy="10.5" r="6" fill="#901818"/><path d="M8 8 Q11 6 13.5 9 Q12 13 9 12.5" stroke="#c86030" stroke-width="1.5" fill="none"/></svg>
<div class="abs" style="left:416px;top:698px;width:19px;height:16px;background:#eef2f2;border:1px solid #d8dce0"></div>
<div class="abs" style="left:418px;top:700px;width:8px;height:12px;background:#3a9a88"></div>
<div class="abs" style="left:428px;top:700px;width:5px;height:12px;background:#dde4e8"></div>
<div class="abs" style="left:431px;top:700px;width:1px;height:5px;background:#444"></div>
<div class="abs" style="left:460px;top:696px;width:16px;height:21px;background:linear-gradient(#ece0a8,#d4c890);border-right:1px solid #c0c8d8;border-bottom:1px solid #b0b8d0"></div>
<svg class="abs" style="left:461px;top:698px" width="15" height="15"><path d="M14 1 C10 1.5 7 4 5 7.5 L7.5 10 C11 8 13.5 5 14 1Z" fill="#e01818"/><path d="M5 7.5 L2 7.5 L4 5 L7 5Z M7.5 10 L7.5 13 L10 11 L10 8Z" fill="#b01010"/><path d="M5.5 9.5 L2 13" stroke="#600" stroke-width="1.5"/></svg>
<svg class="abs" style="left:499px;top:698px" width="16" height="16"><path d="M4 1.5 V14" stroke="#8c9ccc" stroke-width="2"/><path d="M5 4 Q9 0.5 12 2.5 Q13.5 5 8 9.5 L13 14" stroke="#8c9ccc" stroke-width="1.5" fill="none"/></svg>
<svg class="abs" style="left:543px;top:698px" width="16" height="16"><path d="M4 1.5 V14" stroke="#8c9ccc" stroke-width="2"/><path d="M5 4 Q9 0.5 12 2.5 Q13.5 5 8 9.5 L13 14" stroke="#8c9ccc" stroke-width="1.5" fill="none"/></svg>
<div class="abs" style="left:580.5px;top:696px;width:21px;height:21px;border-radius:50%;background:#88c018"></div>
<svg class="abs" style="left:582px;top:699px" width="18" height="15"><path d="M3 5 Q9 2.8 15 5.6 M4 8.2 Q9 6.5 14 8.6 M5 11 Q9 9.8 13 11.3" stroke="#1e2a10" stroke-width="1.8" fill="none" stroke-linecap="round"/></svg>
<div class="abs" style="left:622px;top:696px;width:21px;height:21px;border-radius:50%;background:#1a1a1a;border:1.5px solid #d8d8d8"></div>
<div class="abs" style="left:627px;top:701px;width:11px;height:11px;border-radius:50%;background:#f00a0a"></div>
<svg class="abs" style="left:664px;top:697px" width="22" height="20"><path d="M7 1 L20 4 L15 19 L2 15Z" fill="#a8e0e8"/><path d="M7 1 L15 19 L2 15Z" fill="#60b8cc"/><path d="M7 1 L20 4 L11 9Z" fill="#d0f0f4"/></svg>
<div class="abs" style="left:708px;top:697px;width:15px;height:20px;background:#5aa830;border-radius:3px"></div>
<div class="abs" style="left:706px;top:699px;width:4px;height:17px;background:repeating-linear-gradient(#f0a030 0 2px,transparent 2px 4px)"></div>
<svg class="abs" style="left:1080px;top:705px" width="7" height="5"><path d="M0.5 4.5 L3.5 1 L6.5 4.5Z" fill="#e8ecff"/></svg>
<div class="abs" style="left:1094px;top:704px;width:10px;height:8px;background:linear-gradient(#60a0d0 0 35%,#d8a040 35%);border-radius:2px"></div>
<svg class="abs" style="left:1109px;top:702px" width="12" height="11"><path d="M1.5 0 V11" stroke="#aab" stroke-width="1.4"/><path d="M2 1 H10 L8 3.5 L11 6 H2Z" fill="#f0f0f8"/></svg>
<svg class="abs" style="left:1125px;top:702px" width="10" height="11"><path d="M1 5.5 L9 1 V10Z" fill="#e06a3a"/><path d="M1 5.5 L9 5.5 V10Z" fill="#b04020"/></svg>
<div class="abs" style="left:1142px;top:702px;width:5px;height:5px;background:#ccd;border-radius:1px"></div>
<div class="abs" style="left:1145px;top:706px;width:7px;height:7px;background:#48c040;border-radius:50%"></div>
<div class="abs" style="left:1158px;top:703px;width:10px;height:10px;background:#2a3a10;border:1px solid #66a800"></div>
<svg class="abs" style="left:1173px;top:703px" width="13" height="9"><path d="M2.5 8 Q0.5 8 0.8 6 Q1 4.3 3 4.5 Q3.5 1 7 1.2 Q10 1.5 10.2 4.3 Q12.5 4.5 12.3 6.3 Q12 8 10 8Z" fill="#f6f6fc"/></svg>
<svg class="abs" style="left:1190px;top:702px" width="11" height="12"><rect x="3" y="2" width="7" height="6" fill="none" stroke="#dde" stroke-width="1"/><circle cx="2" cy="2" r="1.5" fill="none" stroke="#dde" stroke-width="0.8"/><path d="M2 3.5 V11 M5 11 H9" stroke="#dde" stroke-width="1"/></svg>
<svg class="abs" style="left:1205px;top:702px" width="12" height="11"><path d="M1 3.5 H3 L6 1 V10 L3 7.5 H1Z" fill="#eef"/><path d="M8 3 Q9.5 5.5 8 8 M9.8 2 Q11.8 5.5 9.8 9" stroke="#dde" fill="none" stroke-width="0.9"/></svg>
<div class="t" style="left:1240px;top:696.5px;font-size:7.7px;line-height:10px;color:#e8ecf8;letter-spacing:-0.3px;-webkit-text-stroke:0.1px currentColor">16:50</div>
<div class="t" style="left:1228px;top:708px;font-size:7.7px;line-height:10px;color:#e8ecf8;-webkit-text-stroke:0.1px currentColor">06/05/2015</div>
</body></html>
